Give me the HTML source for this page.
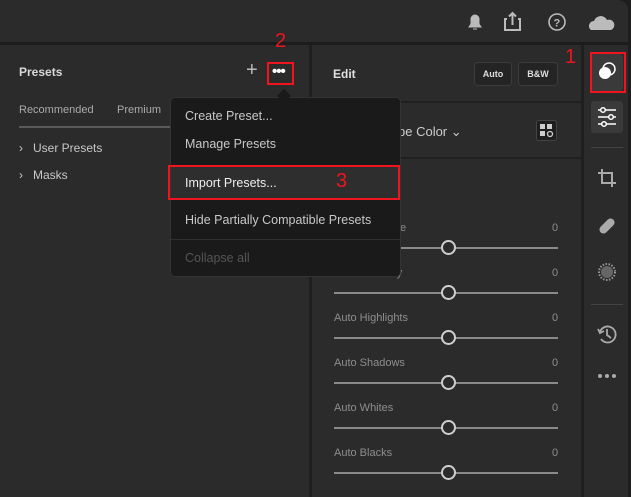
<!DOCTYPE html><html><head><style>
*{margin:0;padding:0;box-sizing:border-box}
body{width:631px;height:497px;background:#1e1e1e;font-family:"Liberation Sans",sans-serif;overflow:hidden;position:relative;color:#ddd}
.a{position:absolute}
.t{font-size:12px;color:#c8c8c8;white-space:nowrap}
.red{color:#f0141e;font-size:20px}
.track{position:absolute;left:334px;width:224px;height:2px;background:#8a8a8a}
.knob{position:absolute;left:441px;width:15px;height:15px;border:2px solid #cfcfcf;border-radius:50%;background:#2b2b2b}
.lab{position:absolute;left:334px;font-size:11px;color:#8e8e8e;white-space:nowrap}
.zero{position:absolute;left:552px;font-size:11px;color:#8e8e8e}
.m{font-size:12.5px}
</style></head><body>
<div class="a" style="left:0;top:0;width:628px;height:497px;background:#2b2b2b;border-top-right-radius:10px"></div>
<div class="a" style="left:0;top:42px;width:631px;height:3px;background:#1c1c1c"></div>
<div class="a" style="left:309px;top:45px;width:3px;height:452px;background:#1f1f1f"></div>
<div class="a" style="left:581px;top:45px;width:3px;height:452px;background:#1f1f1f"></div>
<div class="a" style="left:312px;top:101px;width:269px;height:2px;background:#202020"></div>
<div class="a" style="left:312px;top:157px;width:269px;height:2px;background:#202020"></div>
<svg class="a" style="left:464px;top:10px" width="160" height="24">
<path d="M5 17 L7 14 V9 A4 4 0 0 1 15 9 V14 L17 17 Z M9 19 h4" fill="#bbb" stroke="#bbb" stroke-width="1"/>
<path d="M43 9 H41 V20 H56 V9 H54 M48.5 15 V3 M45 6.5 L48.5 3 52 6.5" fill="none" stroke="#bbb" stroke-width="2"/>
<circle cx="93" cy="12" r="8" fill="none" stroke="#bbb" stroke-width="1.6"/>
<text x="89.5" y="16.5" font-size="11" fill="#bbb" font-family="Liberation Sans" font-weight="bold">?</text>
<path d="M127 20 A5 5 0 0 1 130 11 A7 7 0 0 1 143 10 A5 5 0 0 1 147 20 Z" fill="#bbb"/>
</svg>
<div class="a t" style="left:19px;top:65px;font-weight:bold;font-size:12px;color:#d8d8d8">Presets</div>
<div class="a" style="left:246px;top:59px;font-size:20px;color:#bbb">+</div>
<div class="a" style="left:267px;top:62px;width:27px;height:23px;border:2px solid #f0141e"></div>
<div class="a" style="left:272px;top:63px;font-size:15px;color:#fff;font-weight:bold;letter-spacing:-1px">•••</div>
<div class="a red" style="left:275px;top:30px">2</div>
<div class="a t" style="left:19px;top:104px;font-size:11px;color:#aaa">Recommended</div>
<div class="a t" style="left:117px;top:104px;font-size:11px;color:#aaa">Premium</div>
<div class="a" style="left:19px;top:126px;width:160px;height:2px;background:#5a5a5a"></div>
<div class="a t" style="left:19px;top:141px;color:#c8c8c8">›&nbsp;&nbsp; User Presets</div>
<div class="a t" style="left:19px;top:168px;color:#c8c8c8">›&nbsp;&nbsp; Masks</div>
<div class="a t" style="left:333px;top:67px;font-weight:bold;color:#e0e0e0">Edit</div>
<div class="a" style="left:474px;top:62px;width:38px;height:24px;border:1px solid #3c3c3c;background:#242424;border-radius:4px;font-size:9px;color:#ddd;text-align:center;line-height:22px;font-weight:bold">Auto</div>
<div class="a" style="left:518px;top:62px;width:40px;height:24px;border:1px solid #3c3c3c;background:#242424;border-radius:4px;font-size:9px;color:#ddd;text-align:center;line-height:22px;font-weight:bold">B&amp;W</div>
<div class="a red" style="left:565px;top:46px">1</div>
<div class="a t" style="left:398px;top:124px;font-size:13px;color:#ccc">pe Color ⌄</div>
<div class="a" style="left:536px;top:120px;width:21px;height:21px;border:1px solid #444;border-radius:3px;background:#1e1e1e"></div>
<svg class="a" style="left:540px;top:124px" width="14" height="14"><rect x="0" y="0" width="5" height="5" fill="#ccc"/><rect x="7" y="0" width="5" height="5" fill="#ccc"/><rect x="0" y="7" width="5" height="5" fill="#ccc"/><circle cx="10" cy="10" r="2.5" fill="none" stroke="#ccc" stroke-width="1.3"/></svg>
<div class="lab" style="top:222px">Auto Exposure</div><div class="zero" style="top:222px">0</div>
<div class="track" style="top:247px"></div><div class="knob" style="top:240px"></div>
<div class="lab" style="top:267px">Auto Vibrancy</div><div class="zero" style="top:267px">0</div>
<div class="track" style="top:292px"></div><div class="knob" style="top:285px"></div>
<div class="lab" style="top:312px">Auto Highlights</div><div class="zero" style="top:312px">0</div>
<div class="track" style="top:337px"></div><div class="knob" style="top:330px"></div>
<div class="lab" style="top:357px">Auto Shadows</div><div class="zero" style="top:357px">0</div>
<div class="track" style="top:382px"></div><div class="knob" style="top:375px"></div>
<div class="lab" style="top:402px">Auto Whites</div><div class="zero" style="top:402px">0</div>
<div class="track" style="top:427px"></div><div class="knob" style="top:420px"></div>
<div class="lab" style="top:447px">Auto Blacks</div><div class="zero" style="top:447px">0</div>
<div class="track" style="top:472px"></div><div class="knob" style="top:465px"></div>
<div class="a" style="left:170px;top:97px;width:231px;height:180px;background:#1a1a1a;border:1px solid #333;border-radius:5px"></div>
<div class="a" style="left:279px;top:91px;width:10px;height:10px;background:#1a1a1a;transform:rotate(45deg)"></div>
<div class="a t m" style="left:185px;top:109px">Create Preset...</div>
<div class="a t m" style="left:185px;top:137px">Manage Presets</div>
<div class="a" style="left:171px;top:166px;width:229px;height:32px;background:#2e2e2e"></div>
<div class="a" style="left:168px;top:165px;width:232px;height:35px;border:2px solid #f0141e"></div>
<div class="a t m" style="left:185px;top:176px;color:#eee">Import Presets...</div>
<div class="a red" style="left:336px;top:170px">3</div>
<div class="a t m" style="left:185px;top:213px">Hide Partially Compatible Presets</div>
<div class="a" style="left:171px;top:239px;width:229px;height:1px;background:#2f2f2f"></div>
<div class="a t m" style="left:185px;top:251px;color:#555">Collapse all</div>
<div class="a" style="left:591px;top:54px;width:32px;height:37px;background:#3a3a3a;border-radius:3px"></div>
<div class="a" style="left:590px;top:52px;width:36px;height:41px;border:2px solid #f0141e"></div>
<svg class="a" style="left:597px;top:61px" width="20" height="20"><circle cx="8" cy="12" r="6" fill="#fff"/><circle cx="12" cy="8" r="6" fill="none" stroke="#fff" stroke-width="1.5"/></svg>
<div class="a" style="left:591px;top:101px;width:32px;height:32px;background:#3a3a3a;border-radius:3px"></div>
<svg class="a" style="left:596px;top:106px" width="22" height="22" stroke="#fff" stroke-width="1.5" fill="none"><path d="M2 4h18M2 11h18M2 18h18"/><circle cx="7" cy="4" r="2.3" fill="#3a3a3a"/><circle cx="15" cy="11" r="2.3" fill="#3a3a3a"/><circle cx="8" cy="18" r="2.3" fill="#3a3a3a"/></svg>
<div class="a" style="left:591px;top:147px;width:32px;height:1px;background:#444"></div>
<svg class="a" style="left:596px;top:167px" width="22" height="22" stroke="#aaa" stroke-width="2" fill="none"><path d="M6 2v14h14M2 6h14v14"/></svg>
<svg class="a" style="left:596px;top:215px" width="22" height="22"><rect x="2" y="7" width="18" height="8" rx="4" fill="#aaa" transform="rotate(-45 11 11)"/></svg>
<svg class="a" style="left:596px;top:261px" width="22" height="22"><circle cx="11" cy="11" r="8" fill="none" stroke="#999" stroke-width="2" stroke-dasharray="1.5 1.5"/><circle cx="11" cy="11" r="6" fill="#666"/></svg>
<div class="a" style="left:591px;top:304px;width:32px;height:1px;background:#444"></div>
<svg class="a" style="left:596px;top:323px" width="22" height="22" stroke="#aaa" stroke-width="1.8" fill="none"><path d="M4 9 A8 8 0 1 1 5 16"/><path d="M2 6 L4 10 8 8"/><path d="M11 6v6l4 3"/></svg>
<svg class="a" style="left:596px;top:372px" width="22" height="8"><circle cx="4" cy="4" r="2" fill="#aaa"/><circle cx="11" cy="4" r="2" fill="#aaa"/><circle cx="18" cy="4" r="2" fill="#aaa"/></svg>
</body></html>
